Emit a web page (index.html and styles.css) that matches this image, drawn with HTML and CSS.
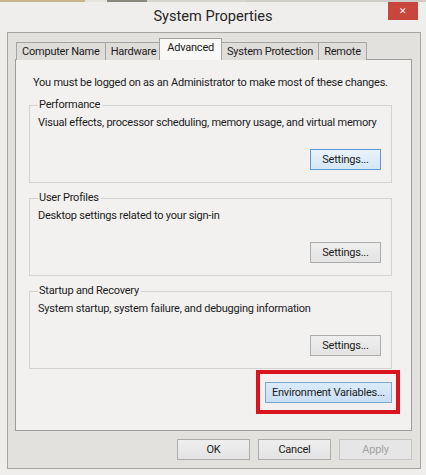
FILE: index.html
```html
<!DOCTYPE html>
<html>
<head>
<meta charset="utf-8">
<link rel="stylesheet" href="styles.css">
</head>
<body>
<div class="desk"><span class="d1"></span><span class="d2"></span><span class="d3"></span><span class="d4"></span><span class="d5"></span></div>
<div class="titlebar">
  <h1 class="title">System Properties</h1>
  <div class="close">&#x2715;</div>
</div>
<div class="client">
  <div class="tabs">
    <div class="tab">Computer Name</div>
    <div class="tab">Hardware</div>
    <div class="tab active">Advanced</div>
    <div class="tab">System Protection</div>
    <div class="tab">Remote</div>
  </div>
  <div class="panel">
    <p class="note">You must be logged on as an Administrator to make most of these changes.</p>
    <fieldset class="group">
      <legend>Performance</legend>
      <p class="desc">Visual effects, processor scheduling, memory usage, and virtual memory</p>
      <div class="actions"><button class="btn focus">Settings...</button></div>
    </fieldset>
    <fieldset class="group">
      <legend>User Profiles</legend>
      <p class="desc">Desktop settings related to your sign-in</p>
      <div class="actions"><button class="btn">Settings...</button></div>
    </fieldset>
    <fieldset class="group">
      <legend>Startup and Recovery</legend>
      <p class="desc">System startup, system failure, and debugging information</p>
      <div class="actions"><button class="btn">Settings...</button></div>
    </fieldset>
    <div class="env-row"><button class="btn env">Environment Variables...</button></div>
  </div>
  <div class="footer">
    <button class="btn fbtn">OK</button>
    <button class="btn fbtn">Cancel</button>
    <button class="btn fbtn disabled">Apply</button>
  </div>
</div>
</body>
</html>
```

FILE: styles.css
```css
* { box-sizing: border-box; }
html, body { margin: 0; padding: 0; }
body {
  width: 426px;
  height: 475px;
  overflow: hidden;
  background: #efeeec;
  font-family: Roboto, "Liberation Sans", sans-serif;
  font-size: 11px;
  letter-spacing: -0.22px;
  color: #1b1b1b;
  display: flex;
  flex-direction: column;
}
.desk { height: 2px; display: flex; flex: none; }
.desk span { display: block; height: 2px; }
.d1 { width: 85px; background: #c9b48c; }
.d2 { width: 22px; background: #e6e4e0; }
.d3 { width: 40px; background: #8a8680; }
.d4 { width: 100px; background: #d6d3cf; }
.d5 { flex: 1; background: #cfccc8; }

.titlebar {
  height: 30px;
  flex: none;
  display: grid;
  grid-template-columns: 1fr auto 1fr;
  align-items: start;
}
.title {
  grid-column: 2;
  margin: 0;
  font-weight: normal;
  font-size: 14.6px;
  letter-spacing: 0;
  line-height: 28px;
  color: #262626;
}
.close {
  grid-column: 3;
  justify-self: end;
  margin-right: 8px;
  width: 30px;
  height: 18px;
  background: #c9463d;
  color: #fff;
  font-size: 9px;
  letter-spacing: 0;
  display: flex;
  align-items: center;
  justify-content: center;
}

.client {
  flex: 1;
  margin: 0 5px 6px 7px;
  border: 1px solid #a7a5a2;
  background: #e3e1de;
  padding: 5px 8px 0 7px;
  display: flex;
  flex-direction: column;
}
.tabs {
  display: flex;
  align-items: flex-end;
  height: 22px;
  padding-left: 1px;
  position: relative;
  z-index: 1;
  margin-bottom: -1px;
}
.tab {
  height: 18px;
  line-height: 17px;
  padding: 0 5px;
  border: 1px solid #a5a5a5;
  border-bottom: none;
  margin-right: -1px;
  background: #dfddda;
  color: #1b1b1b;
  white-space: nowrap;
}
.tab.active {
  height: 22px;
  line-height: 18px;
  background: #f8f8f7;
  margin: 0 -1px 0 -2px;
  padding: 0 7px;
  border-color: #a0a0a0;
}
.panel {
  height: 372px;
  flex: none;
  border: 1px solid #9c9c9c;
  background: #f2f1f0;
  padding: 15px 19px 0 13px;
  display: flex;
  flex-direction: column;
}
.note {
  margin: 0 0 7px 4px;
  line-height: 16px;
  white-space: nowrap;
}
.group {
  margin: 0 0 8px 0;
  padding: 3px 10px 12px 8px;
  border: 1px solid #d3d2d1;
  min-width: 0;
}
.group legend {
  padding: 0 2px 0 1px;
  line-height: 14px;
  color: #1b1b1b;
}
.desc {
  margin: 0;
  line-height: 16px;
  white-space: nowrap;
}
.actions {
  display: flex;
  justify-content: flex-end;
  margin-top: 18px;
}
.btn {
  font-family: inherit;
  font-size: 11px;
  letter-spacing: -0.22px;
  color: #1b1b1b;
  height: 21px;
  padding: 0;
  border: 1px solid #acacac;
  background: linear-gradient(#efefef, #e3e3e3);
  line-height: 17px;
  white-space: nowrap;
}
.group .btn { width: 71px; }
.btn.focus {
  border-color: #5a9ad8;
  background: linear-gradient(#eaf3fb, #d4e6f6);
}
.env-row {
  display: flex;
  justify-content: flex-end;
  margin-top: 5px;
}
.btn.env {
  position: relative;
  width: 127px;
  border-color: #7aa7d3;
  background: linear-gradient(#dcebf9, #c9dff4);
}
.btn.env::after {
  content: "";
  position: absolute;
  top: -13px;
  bottom: -12px;
  left: -10px;
  right: -9px;
  border: 4px solid #d9141e;
}
.footer {
  display: flex;
  justify-content: flex-end;
  gap: 8px;
  margin-top: 8px;
}
.fbtn { width: 73px; }
.btn.disabled {
  color: #a3a3a3;
  border-color: #c4c4c4;
  background: #e6e6e6;
}
```
